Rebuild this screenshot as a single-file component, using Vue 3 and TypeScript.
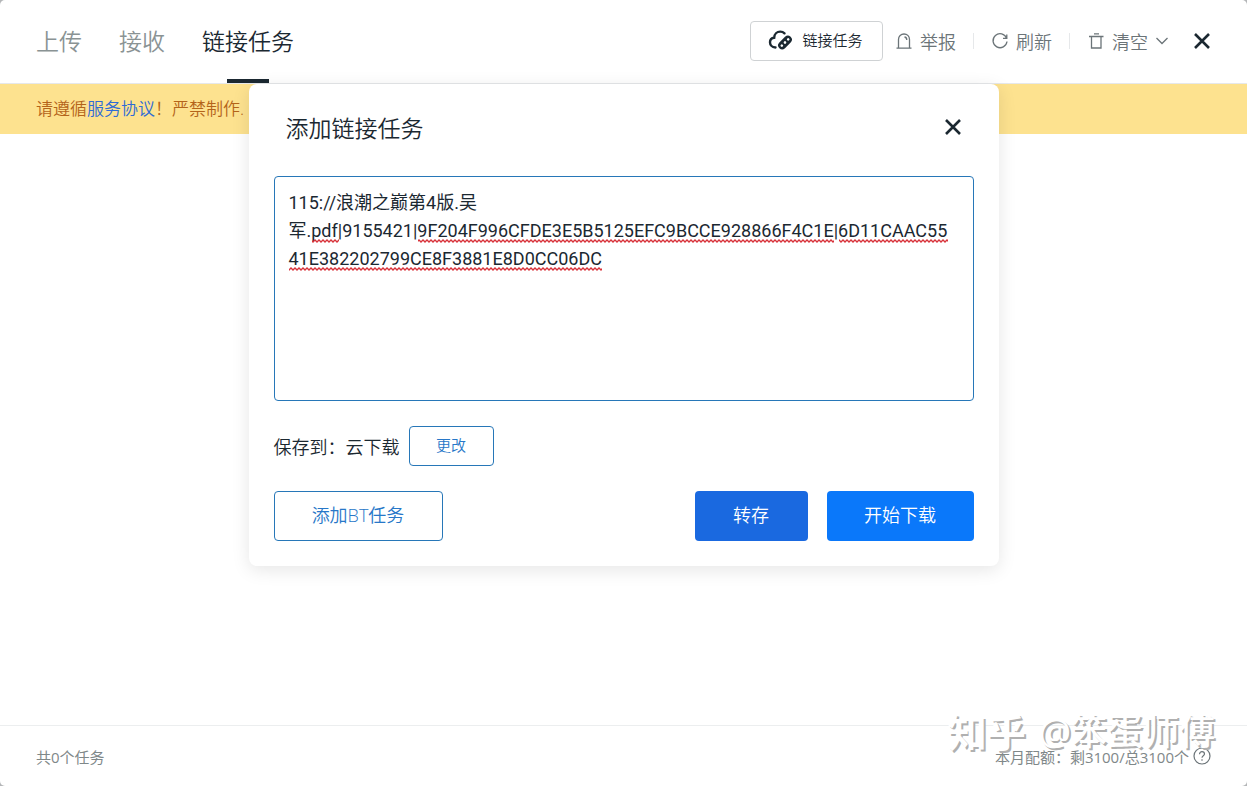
<script setup lang="ts">
import { nextTick, onMounted, ref } from 'vue'

interface Mark {
  x: number
  y: number
  width: number
}

const LINE_HEIGHT = 28
const tabs = ['上传', '接收', '链接任务']
const active = ref('链接任务')
const links = ref(
  '115://浪潮之巅第4版.吴\n军.pdf|9155421|9F204F996CFDE3E5B5125EFC9BCCE928866F4C1E|6D11CAAC55\n41E382202799CE8F3881E8D0CC06DC',
)
const field = ref<HTMLTextAreaElement | null>(null)
const marks = ref<Mark[]>([])

// Underlines every run of Latin text that is not a plain number.
function markSpelling() {
  const el = field.value
  const ctx = document.createElement('canvas').getContext('2d')
  if (!el || !ctx) return
  const style = getComputedStyle(el)
  ctx.font = `${style.fontWeight} ${style.fontSize} ${style.fontFamily}`
  const found: Mark[] = []
  links.value.split('\n').forEach((line, row) => {
    for (const m of line.matchAll(/[0-9A-Za-z]+/g)) {
      if (!/[A-Za-z]/.test(m[0])) continue
      found.push({
        x: Math.round(ctx.measureText(line.slice(0, m.index)).width),
        y: (row + 1) * LINE_HEIGHT - 6,
        width: Math.round(ctx.measureText(m[0]).width),
      })
    }
  })
  marks.value = found
}

onMounted(markSpelling)
function onInput() {
  nextTick(markSpelling)
}
</script>

<template>
  <div class="window">
    <header class="topbar">
      <nav class="tabs">
        <button
          v-for="tab in tabs"
          :key="tab"
          type="button"
          class="tab"
          :class="{ active: tab === active }"
          @click="active = tab"
        >{{ tab }}</button>
      </nav>
      <div class="tools">
        <button type="button" class="link-task">
          <svg width="26" height="22" viewBox="0 0 26 22" fill="none" stroke="#1b2831" stroke-width="2.4" stroke-linecap="round">
            <path d="M7.500 18.500C3.800 18.300 2 15.800 2 13.300C2 10.800 3.800 9 6.200 8.700C6.300 5 9 2.600 12.200 2.600C14 2.600 15.400 3.200 16.500 4.300" />
            <g transform="rotate(-45 17 13.500)">
              <rect x="9" y="9.500" width="16" height="8" rx="4" fill="#1b2831" stroke="none" />
              <g fill="#fff" stroke="none">
                <circle cx="12.500" cy="13.500" r="1.300" />
                <circle cx="17" cy="13.500" r="1.300" />
                <circle cx="21.500" cy="13.500" r="1.300" />
              </g>
            </g>
          </svg>
          <span>链接任务</span>
        </button>
        <button type="button" class="tool">
          <svg width="18" height="18" viewBox="0 0 18 18" fill="none" stroke="#6b7478" stroke-width="1.3">
            <path d="M1.5 16.2H16.5M3.5 16V7.5C3.5 4 6 2 9 2S14.500 4 14.500 7.500V16M9.500 5C11 5.200 11.800 6.200 11.800 8" />
          </svg>
          <span>举报</span>
        </button>
        <i class="divider"></i>
        <button type="button" class="tool">
          <svg width="18" height="18" viewBox="0 0 18 18" fill="none" stroke="#6b7478" stroke-width="1.3">
            <path d="M15.600 6.200A7 7 0 1 0 16 9.500M15.800 2.500V6.400H12" />
          </svg>
          <span>刷新</span>
        </button>
        <i class="divider"></i>
        <button type="button" class="tool">
          <svg width="18" height="18" viewBox="0 0 18 18" fill="none" stroke="#6b7478" stroke-width="1.3">
            <path d="M2 4.500H16.500M7 1.800H12M4.500 4.500V16H14V4.500" />
          </svg>
          <span>清空</span>
          <svg width="14" height="10" viewBox="0 0 14 10" fill="none" stroke="#6b7478" stroke-width="1.3">
            <path d="M1.500 2L7 7.500L12.500 2" />
          </svg>
        </button>
        <button type="button" class="close" aria-label="关闭">
          <svg width="18" height="18" viewBox="0 0 18 18" stroke="#1b2831" stroke-width="2.6">
            <path d="M2 2L16 16M16 2L2 16" />
          </svg>
        </button>
      </div>
    </header>

    <main class="content">
      <p class="notice">请遵循<a href="#">服务协议</a>！严禁制作.</p>
    </main>

    <footer class="statusbar">
      <span>共0个任务</span>
      <span class="quota">
        本月配额：剩3100/总3100个
        <svg width="18" height="18" viewBox="0 0 18 18" fill="none" stroke="#6b7478" stroke-width="1.2">
          <circle cx="9" cy="9" r="8" />
          <path d="M6.500 7.200C6.500 5.600 7.600 4.700 9 4.700S11.500 5.600 11.500 7C11.500 8.700 9 8.800 9 10.800M9 12.300V13.700" />
        </svg>
      </span>
      <div class="watermark"><b>知乎</b><span>@笨蛋师傅</span></div>
    </footer>

    <section class="dialog" role="dialog" aria-labelledby="dialog-title">
      <div class="dialog-head">
        <h1 id="dialog-title">添加链接任务</h1>
        <button type="button" class="close" aria-label="关闭">
          <svg width="18" height="18" viewBox="0 0 18 18" stroke="#1b2831" stroke-width="2.6">
            <path d="M2 2L16 16M16 2L2 16" />
          </svg>
        </button>
      </div>
      <div class="editor">
        <textarea ref="field" v-model="links" aria-label="链接任务" spellcheck="false" @input="onInput"></textarea>
        <svg class="spelling" aria-hidden="true">
          <defs>
            <pattern id="squiggle" y="2" width="4" height="4" patternUnits="userSpaceOnUse">
              <path d="M-1 2L0 3L2 1L4 3L5 2" fill="none" stroke="#d8323a" stroke-width="1.3" />
            </pattern>
          </defs>
          <rect
            v-for="(m, i) in marks"
            :key="i"
            :x="m.x"
            :y="m.y"
            :width="m.width"
            height="4"
            fill="url(#squiggle)"
          />
        </svg>
      </div>
      <div class="save-row">
        <span>保存到：云下载</span>
        <button type="button" class="outline small">更改</button>
      </div>
      <div class="actions">
        <button type="button" class="outline">添加BT任务</button>
        <div class="primary-group">
          <button type="button" class="solid transfer">转存</button>
          <button type="button" class="solid start">开始下载</button>
        </div>
      </div>
    </section>
  </div>
</template>

<style>
body {
  margin: 0;
  background: #b4b6b8;
}
</style>

<style scoped>
* {
  box-sizing: border-box;
}
.window {
  position: relative;
  display: flex;
  flex-direction: column;
  min-height: 100vh;
  border-radius: 5px;
  background: #fff;
  overflow: hidden;
  color: #1b2831;
  font-family: 'Open Sans', 'Noto Sans CJK SC', sans-serif;
  font-weight: 350;
  font-size: 18px;
}
button,
textarea {
  font: inherit;
  color: inherit;
}
button {
  padding: 0 0 4px;
  border: 0;
  background: none;
  cursor: pointer;
}
svg {
  display: block;
  flex: none;
}
.topbar {
  display: flex;
  justify-content: space-between;
  align-items: center;
  height: 84px;
  padding: 0 36px;
  border-bottom: 1px solid #e6e8ea;
}
.tabs {
  display: flex;
  gap: 37px;
  height: 100%;
}
.tab {
  position: relative;
  font-size: 23px;
  color: #8a9394;
}
.tab.active {
  color: #1b2831;
}
.tab.active::after {
  content: '';
  position: absolute;
  left: 50%;
  bottom: 0;
  width: 42px;
  height: 4px;
  margin-left: -21px;
  background: #1b2831;
}
.tools {
  display: flex;
  align-items: center;
  padding-bottom: 2px;
}
.link-task {
  display: flex;
  align-items: center;
  justify-content: center;
  gap: 8px;
  width: 133px;
  height: 40px;
  margin-right: 12px;
  padding: 0 2px 2px 0;
  border: 1px solid #cfd2d4;
  border-radius: 4px;
  font-size: 15px;
}
.tool {
  display: flex;
  align-items: center;
  gap: 7px;
  padding: 0;
  color: #6b7478;
}
.divider {
  width: 1px;
  height: 16px;
  margin: 0 17px;
  background: #e6e8ea;
}
.close {
  padding: 0;
}
.topbar .close {
  margin-left: 24px;
}
.content {
  flex: 1;
}
.notice {
  margin: 0;
  padding: 0 36px;
  font-size: 17px;
  line-height: 50px;
  background: #fde28f;
  color: #b4641a;
}
.notice a {
  color: #2f6bd6;
  text-decoration: none;
}
.statusbar {
  position: relative;
  display: flex;
  justify-content: space-between;
  align-items: center;
  height: 61px;
  padding: 0 36px;
  border-top: 1px solid #eceeef;
  font-size: 15px;
  font-weight: 400;
  color: #7f8889;
}
.quota {
  display: flex;
  align-items: center;
  gap: 4px;
}
.watermark {
  position: absolute;
  right: 32px;
  top: -22px;
  display: flex;
  align-items: center;
  gap: 13px;
  font-size: 36px;
  line-height: 56px;
  color: #fff;
  text-shadow: 2px 2px 0 #b0b0b0;
  white-space: nowrap;
  pointer-events: none;
}
.watermark b {
  font-size: 39px;
  font-weight: 700;
}
.watermark span {
  font-weight: 500;
}
.dialog {
  position: absolute;
  top: 84px;
  left: 50%;
  width: 750px;
  max-width: 100%;
  padding: 0 25px 25px;
  transform: translateX(-50%);
  border-radius: 8px;
  background: #fff;
  box-shadow: 0 4px 18px rgba(0, 0, 0, 0.1);
}
.dialog-head {
  display: flex;
  justify-content: space-between;
  align-items: center;
  height: 92px;
  padding: 0 12px 6px;
}
.dialog-head h1 {
  margin: 0;
  font-size: 23px;
  font-weight: 350;
}
.editor {
  position: relative;
  height: 225px;
}
.editor textarea {
  display: block;
  width: 100%;
  height: 100%;
  margin: 0;
  padding: 12px 14px;
  border: 1px solid #2777b8;
  border-radius: 4px;
  background: none;
  font-family: Roboto, 'Noto Sans CJK SC', sans-serif;
  font-weight: 400;
  line-height: 28px;
  white-space: pre-wrap;
  overflow: hidden;
  overflow-wrap: break-word;
  resize: none;
  outline: none;
}
.spelling {
  position: absolute;
  top: 13px;
  left: 15px;
  width: calc(100% - 30px);
  height: calc(100% - 26px);
  pointer-events: none;
}
.save-row {
  display: flex;
  align-items: center;
  gap: 9px;
  margin: 25px 0;
}
.outline {
  width: 169px;
  height: 50px;
  border: 1px solid #2777b8;
  border-radius: 4px;
  color: #2777c8;
}
.outline.small {
  width: 85px;
  height: 40px;
  font-size: 15px;
}
.actions,
.primary-group {
  display: flex;
  justify-content: space-between;
  gap: 19px;
}
.solid {
  height: 50px;
  border-radius: 4px;
  color: #fff;
}
.transfer {
  width: 113px;
  background: #1a69e0;
}
.start {
  width: 147px;
  background: #0a78fa;
}
</style>
